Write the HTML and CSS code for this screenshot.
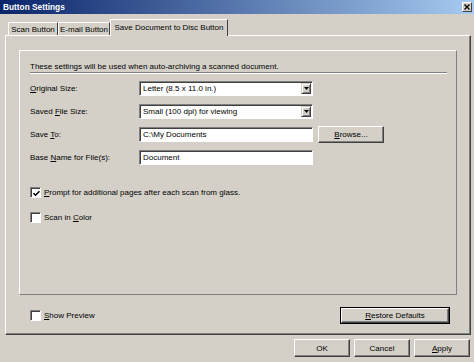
FILE: index.html
```html
<!DOCTYPE html>
<html>
<head>
<meta charset="utf-8">
<link rel="stylesheet" href="styles.css">
</head>
<body>
<div class="titlebar">
  <span class="title">Button Settings</span>
  <span class="close"><svg width="6" height="6" viewBox="0 0 6 6"><path d="M0.5 0.5L5.5 5.5M5.5 0.5L0.5 5.5" stroke="#000" stroke-width="1.4"/></svg></span>
</div>
<div class="main">
  <div class="tabs">
    <div class="tab t1">Scan Button</div>
    <div class="tab t2">E-mail Button</div>
    <div class="tab t3 active">Save Document to Disc Button</div>
  </div>
  <div class="panel">
    <div class="group">
      <div class="intro">These settings will be used when auto-archiving a scanned document.</div>
      <div class="form">
        <label class="lbl"><u>O</u>riginal Size:</label>
        <div class="field combo"><span class="val">Letter (8.5 x 11.0 in.)</span><span class="drop"><svg width="5" height="3" viewBox="0 0 5 3"><path d="M0 0H5L2.5 3Z" fill="#000"/></svg></span></div>
        <span></span>
        <label class="lbl">Saved <u>F</u>ile Size:</label>
        <div class="field combo"><span class="val">Small (100 dpi) for viewing</span><span class="drop"><svg width="5" height="3" viewBox="0 0 5 3"><path d="M0 0H5L2.5 3Z" fill="#000"/></svg></span></div>
        <span></span>
        <label class="lbl">Save <u>T</u>o:</label>
        <div class="field"><span class="val">C:\My Documents</span></div>
        <button class="btn browse"><u>B</u>rowse...</button>
        <label class="lbl">Base <u>N</u>ame for File(s):</label>
        <div class="field"><span class="val">Document</span></div>
        <span></span>
      </div>
      <div class="checks">
        <div class="check"><span class="box"><svg width="7" height="7" viewBox="0 0 7 7"><path d="M0.5 3.2L2.5 5.2L6.5 1.2" stroke="#000" stroke-width="1.6" fill="none"/></svg></span><span><u>P</u>rompt for additional pages after each scan from glass.</span></div>
        <div class="check"><span class="box"></span><span>Scan in <u>C</u>olor</span></div>
      </div>
    </div>
    <div class="panel-foot">
      <div class="check"><span class="box"></span><span><u>S</u>how Preview</span></div>
      <button class="btn default"><span><u>R</u>estore Defaults</span></button>
    </div>
  </div>
  <div class="actions">
    <button class="btn act">OK</button>
    <button class="btn act">Cancel</button>
    <button class="btn act"><u>A</u>pply</button>
  </div>
</div>
</body>
</html>
```

FILE: styles.css
```css
* { box-sizing: border-box; }
html, body { margin: 0; padding: 0; }
body {
  width: 474px;
  height: 362px;
  overflow: hidden;
  background: #d4d0c8;
  font-family: "Liberation Sans", Arial, sans-serif;
  font-size: 8px;
  line-height: 11px;
  color: #000;
}
u { text-decoration: underline; text-underline-offset: 1px; }
.titlebar {
  height: 14px;
  background: linear-gradient(to right, #0a246a, #a6caf0);
  display: flex;
  align-items: center;
  justify-content: space-between;
  padding: 0 2px 0 3px;
}
.title { color: #fff; font-weight: bold; font-size: 8.3px; }
.close {
  width: 10px;
  height: 10px;
  background: #d4d0c8;
  border: 1px solid;
  border-color: #fff #404040 #404040 #fff;
  display: flex;
  align-items: center;
  justify-content: center;
}
.main { padding: 5px 3px 0 5px; }
.tabs {
  display: flex;
  align-items: flex-end;
  height: 16px;
  padding-left: 3px;
  position: relative;
  z-index: 1;
}
.tab {
  height: 13px;
  border-top: 1px solid #fff;
  border-left: 1px solid #fff;
  border-right: 1px solid #404040;
  display: flex;
  align-items: center;
  justify-content: center;
  background: #d4d0c8;
}
.t1 { width: 50px; }
.t2 { width: 52px; }
.t3 { width: 118px; }
.tab.active { height: 17px; margin-bottom: -1px; padding-bottom: 2px; }
.panel {
  height: 300px;
  border: 1px solid;
  border-color: #fff #404040 #404040 #fff;
  box-shadow: inset -1px -1px #808080;
  padding: 14px 13px 0 13px;
  display: flex;
  flex-direction: column;
}
.group {
  height: 245px;
  border: 1px solid;
  border-color: #fff #808080 #808080 #fff;
  padding: 0 9px 0 10px;
}
.intro {
  padding-top: 10px;
  border-bottom: 1px solid #808080;
  box-shadow: 0 1px #fff;
}
.form {
  margin-top: 8px;
  display: grid;
  grid-template-columns: 104px 174px 66px;
  grid-auto-rows: 15px;
  row-gap: 8px;
  column-gap: 5px;
  align-items: center;
}
.field {
  height: 15px;
  background: #fff;
  border: 1px solid;
  border-color: #808080 #fff #fff #808080;
  box-shadow: inset 1px 1px #404040;
  display: flex;
  align-items: center;
  padding-left: 3px;
}
.val { flex: 1; white-space: nowrap; }
.drop {
  width: 10px;
  height: 11px;
  margin-right: 1px;
  background: #d4d0c8;
  border: 1px solid;
  border-color: #d4d0c8 #404040 #404040 #d4d0c8;
  box-shadow: inset 1px 1px #fff, inset -1px -1px #808080;
  display: flex;
  align-items: center;
  justify-content: center;
}
.btn {
  font: inherit;
  color: #000;
  background: #d4d0c8;
  border: 1px solid;
  border-color: #fff #404040 #404040 #fff;
  box-shadow: inset -1px -1px #808080;
  padding: 0;
  display: flex;
  align-items: center;
  justify-content: center;
}
.browse { height: 17px; width: 66px; }
.checks {
  margin-top: 21px;
  display: flex;
  flex-direction: column;
  gap: 12px;
}
.check { display: flex; align-items: center; gap: 3px; height: 13px; }
.box {
  width: 11px;
  height: 11px;
  background: #fff;
  border: 1px solid;
  border-color: #808080 #fff #fff #808080;
  box-shadow: inset 1px 1px #404040;
  display: flex;
  align-items: center;
  justify-content: center;
  padding: 1px 0 0 1px;
}
.panel-foot {
  margin-top: 12px;
  height: 16px;
  display: flex;
  align-items: center;
  justify-content: space-between;
  padding: 0 7px 0 11px;
}
.default {
  width: 110px;
  height: 17px;
  border: 1px solid #000;
  box-shadow: none;
  padding: 0;
}
.default > span {
  width: 100%;
  height: 100%;
  display: flex;
  align-items: center;
  justify-content: center;
  border: 1px solid;
  border-color: #fff #404040 #404040 #fff;
  box-shadow: inset -1px -1px #808080;
}
.actions {
  margin-top: 4px;
  display: flex;
  justify-content: flex-end;
  gap: 4px;
  padding-right: 1px;
}
.act { width: 56px; height: 18px; }
```
